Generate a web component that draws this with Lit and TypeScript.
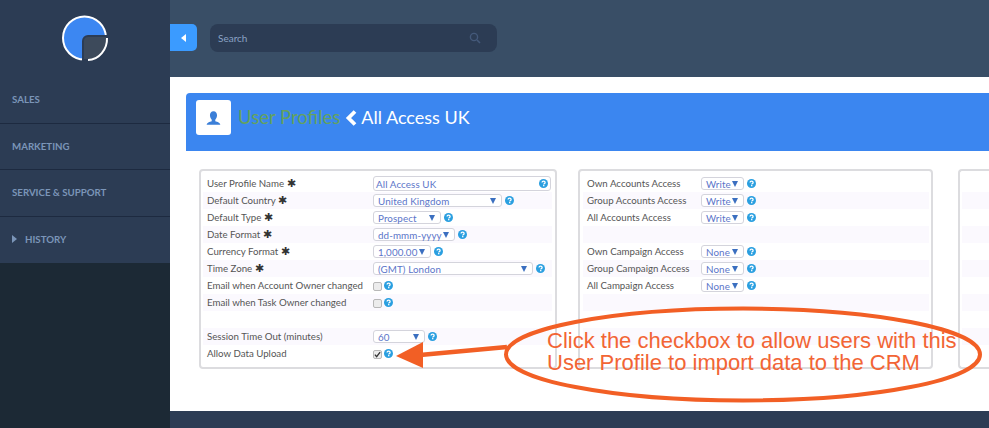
import { LitElement, html, css, svg } from "lit";
import { customElement } from "lit/decorators.js";

const help = html`<svg class="help" viewBox="0 0 10 10"><circle cx="5" cy="5" r="5" fill="#2a9fe0"/><path d="M3.400 3.900C3.400 2.800 4.200 2.300 5.100 2.300s1.700.5 1.700 1.500c0 1.300-1.500 1.200-1.500 2.300" fill="none" stroke="#fff" stroke-width="1.400"/><rect x="4.500" y="6.700" width="1.500" height="1.400" fill="#fff"/></svg>`;
const star = html`<span class="star">✱</span>`;

type Row = { label?: string; req?: boolean; kind?: "text" | "select" | "check"; value?: string; w?: number; checked?: boolean };

const left: Row[] = [
  { label: "User Profile Name", req: true, kind: "text", value: "All Access UK", w: 178 },
  { label: "Default Country", req: true, kind: "select", value: "United Kingdom", w: 129 },
  { label: "Default Type", req: true, kind: "select", value: "Prospect", w: 68 },
  { label: "Date Format", req: true, kind: "select", value: "dd-mmm-yyyy", w: 82 },
  { label: "Currency Format", req: true, kind: "select", value: "1,000.00", w: 58 },
  { label: "Time Zone", req: true, kind: "select", value: "(GMT) London", w: 160 },
  { label: "Email when Account Owner changed", kind: "check" },
  { label: "Email when Task Owner changed", kind: "check" },
  {},
  { label: "Session Time Out (minutes)", kind: "select", value: "60", w: 52 },
  { label: "Allow Data Upload", kind: "check", checked: true },
];

const access = (label: string, value: string): Row => ({ label, kind: "select", value, w: 43 });
const right: Row[] = [
  access("Own Accounts Access", "Write"),
  access("Group Accounts Access", "Write"),
  access("All Accounts Access", "Write"),
  {},
  access("Own Campaign Access", "None"),
  access("Group Campaign Access", "None"),
  access("All Campaign Access", "None"),
  {},
  {},
  {},
  {},
];

@customElement("app-root")
export class AppRoot extends LitElement {
  static styles = css`
    :host { display: block; width: 989px; height: 428px; overflow: hidden; position: relative; font-family: Lato, "Liberation Sans", sans-serif; background: #2c3c54; }
    .shell { display: grid; grid-template-columns: 170px 1fr; height: 428px; }
    .side { background: #1c2935; }
    .side-top { background: #2c3c54; }
    .logo { height: 76px; display: flex; justify-content: center; align-items: flex-start; padding-top: 14px; box-sizing: border-box; }
    .logo svg { width: 48px; height: 48px; }
    .nav { height: 46px; border-bottom: 1px solid #1d2a40; box-sizing: border-box; padding: 0 12px 2px; display: flex; align-items: center; gap: 8px; font-size: 9.700px; font-weight: 700; color: #7b95b8; }
    .nav.first { height: 48px; }
    .nav.mid { height: 47px; }
    .nav.last { border-bottom: none; }
    .tri { width: 0; height: 0; border-left: 5px solid #7b95b8; border-top: 4px solid transparent; border-bottom: 4px solid transparent; }
    .main { display: flex; flex-direction: column; min-width: 0; height: 411px; }
    .top { height: 77px; background: #394e66; display: flex; gap: 13px; padding-top: 24px; box-sizing: border-box; }
    .toggle { width: 27px; height: 27px; background: #3b9bff; border-radius: 0 5px 5px 0; display: flex; align-items: center; justify-content: center; }
    .toggle i { width: 0; height: 0; border-right: 5px solid #fff; border-top: 4px solid transparent; border-bottom: 4px solid transparent; }
    .search { width: 287px; height: 28px; background: #2c3c54; border-radius: 8px; display: flex; align-items: center; justify-content: space-between; padding: 0 16px 0 8px; box-sizing: border-box; font-size: 10px; color: #8aa2c4; }
    .search svg { width: 12px; height: 12px; }
    .content { flex: 1; background: #fff; padding: 16px 0 0 16px; overflow: hidden; }
    .title { height: 58px; background: #3b86f0; border-radius: 4px 0 0 0; display: flex; align-items: flex-start; gap: 7px; padding: 7px 0 0 10px; box-sizing: border-box; font-size: 18px; line-height: 35px; color: #fff; white-space: nowrap; }
    .ibox { width: 35px; height: 35px; background: #fff; border-radius: 3px; display: flex; align-items: center; justify-content: center; }
    .ibox svg { width: 15px; height: 14px; }
    .crumbs { display: flex; align-items: center; height: 35px; }
    .link { color: #64a25f; font-size: 18.500px; }
    .chev { width: 12px; height: 16px; margin: 0 4px 0 5px; }
    .panels { display: flex; padding: 18px 0 0 13px; gap: 21px; }
    .panel { flex: none; height: 200px; border: 2px solid #dcdcdf; border-radius: 4px; box-sizing: border-box; padding: 4px 3px 4px 2px; }
    .p1 { width: 358px; }
    .p2 { width: 355px; margin-right: 4px; padding: 4px 2px 4px 3px; }
    .p3 { width: 60px; border-right: none; }
    .row { height: 17px; display: flex; align-items: center; font-size: 9.700px; color: #555; padding-left: 4px; white-space: nowrap; }
    .row:nth-child(even) { background: #fbf9fe; }
    .label { flex: none; margin-bottom: 2px; }
    .p1 .label { width: 166px; }
    .p2 .label { width: 114px; }
    .star { font-size: 11px; color: #333; line-height: 10px; }
    .ctl { height: 13px; border: 1px solid #d4d4dc; border-radius: 3px; box-sizing: border-box; display: flex; align-items: center; justify-content: space-between; color: #5b75c9; font-size: 9.800px; letter-spacing: 0.1px; padding: 0 5px 0 4px; background: #fff; flex: none; }
    .ctl.text { height: 15px; padding: 0 2px 0 2px; }
    .arrow { width: 0; height: 0; border-top: 6px solid #3b6fc0; border-left: 3.500px solid transparent; border-right: 3.500px solid transparent; }
    .help { width: 9px; height: 9px; flex: none; }
    .ctl + .help { margin-left: 3px; }
    .check { width: 9px; height: 9px; border: 1px solid #b8b8b8; background: #ececec; border-radius: 2px; box-sizing: border-box; display: flex; align-items: center; justify-content: center; margin: 2px 2px 0 0; }
    .check svg { width: 7px; height: 7px; }
    .ann { position: absolute; left: 0; top: 0; pointer-events: none; }
    .note { position: absolute; left: 547px; top: 330px; font-family: "Liberation Sans", Arial, sans-serif; font-size: 22px; line-height: 22px; color: #f26535; white-space: nowrap; }
  `;

  private ctl(r: Row) {
    if (r.kind === "text")
      return html`<div class="ctl text" style="width:${r.w}px"><span>${r.value}</span>${help}</div>`;
    if (r.kind === "select")
      return html`<div class="ctl" style="width:${r.w}px"><span>${r.value}</span><i class="arrow"></i></div>${help}`;
    if (r.kind === "check")
      return html`<div class="check">${r.checked
        ? html`<svg viewBox="0 0 8 8"><path d="M1 4.200 3 6.500 7 1.200" fill="none" stroke="#333" stroke-width="1.500"/></svg>`
        : ""}</div>${help}`;
    return "";
  }

  private rows(rows: Row[]) {
    return rows.map(
      (r) => html`<div class="row">
        ${r.label ? html`<div class="label">${r.label}${r.req ? html` ${star}` : ""}</div>` : ""}
        ${this.ctl(r)}
      </div>`
    );
  }

  render() {
    return html`
      <div class="shell">
        <aside class="side">
          <div class="side-top">
            <div class="logo">
              <svg viewBox="0 0 48 48">
                <circle cx="23.500" cy="24" r="21.500" fill="#3c87f2" stroke="#fff" stroke-width="2"/>
                <path d="M22 46V27a5 5 0 0 1 5-5H46V30C46 40 36 47 24 46Z" fill="#3d4a5b" stroke="#2c3c54" stroke-width="2"/>
                <path d="M46 24C46.500 35 38 46 27 46" fill="none" stroke="#fff" stroke-width="2"/>
              </svg>
            </div>
            <div class="nav first">SALES</div>
            <div class="nav">MARKETING</div>
            <div class="nav mid">SERVICE &amp; SUPPORT</div>
            <div class="nav last"><span class="tri"></span>HISTORY</div>
          </div>
        </aside>
        <div class="main">
          <div class="top">
            <div class="toggle"><i></i></div>
            <div class="search"><span>Search</span>
              <svg viewBox="0 0 12 12"><circle cx="5" cy="5" r="3.600" fill="none" stroke="#44597a" stroke-width="1.400"/><path d="M8 8l3 3" stroke="#44597a" stroke-width="1.600"/></svg>
            </div>
          </div>
          <div class="content">
            <div class="title">
              <div class="ibox"><svg viewBox="1.500 1.500 11 10"><path d="M7 1.500c1.700 0 2.600 1.200 2.600 3 0 1.300-.6 2.600-1.300 3.200v1.100c1.500.5 3.700 1 3.700 2.700H2c0-1.700 2.200-2.200 3.700-2.700V7.700C5 7.100 4.400 5.800 4.400 4.500c0-1.800.9-3 2.600-3z" fill="#3b7fd8"/></svg></div>
              <div class="crumbs"><span class="link">User Profiles</span><svg class="chev" viewBox="0 0 12 16"><path d="M10 1.500 3.500 8l6.500 6.500" fill="none" stroke="#fff" stroke-width="3.800"/></svg>All Access UK</div>
            </div>
            <div class="panels">
              <div class="panel p1">${this.rows(left)}</div>
              <div class="panel p2">${this.rows(right)}</div>
              <div class="panel p3">${this.rows(right.map(() => ({})))}</div>
            </div>
          </div>
        </div>
      </div>
      <svg class="ann" width="989" height="428" viewBox="0 0 989 428">
        ${svg`<ellipse cx="743" cy="354.500" rx="237" ry="46" fill="none" stroke="#f25f25" stroke-width="4"/>
        <path d="M507 347 420 355" stroke="#f25f25" stroke-width="4.500" fill="none"/>
        <path d="M396 356 423 342 423 368Z" fill="#f25f25"/>`}
      </svg>
      <div class="note">Click the checkbox to allow users with this<br/>User Profile to import data to the CRM</div>
    `;
  }
}
